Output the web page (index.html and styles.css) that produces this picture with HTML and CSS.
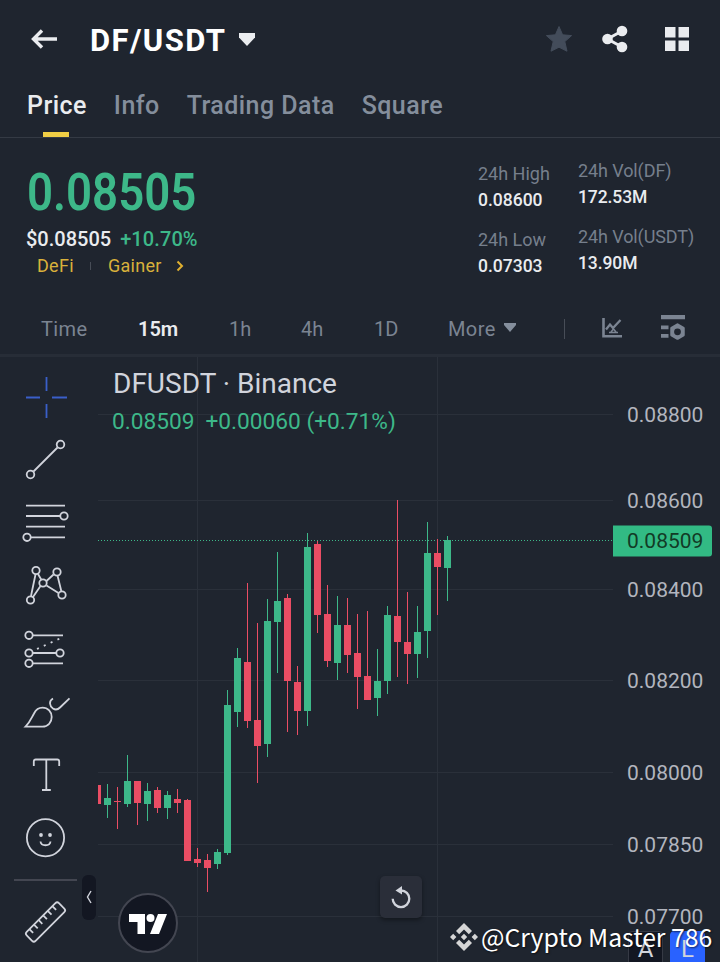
FILE: index.html
```html
<!DOCTYPE html>
<html lang="en">
<head>
  <meta charset="UTF-8">
  <meta name="viewport" content="width=device-width, initial-scale=1.0">
  <title>DF/USDT</title>
  <link rel="stylesheet" href="styles.css">
</head>
<body>
  <header class="topbar">
    <svg class="back" width="28" height="22" viewBox="0 0 28 22"><path d="M27 11H4M12 2.500L3.500 11L12 19.500" fill="none" stroke="#eaecef" stroke-width="3.400"/></svg>
    <h1>DF/USDT</h1>
    <svg class="caret" width="16" height="13" viewBox="0 0 16 13"><path d="M0 0h16v4.500L8 13L0 4.500z" fill="#eaecef"/></svg>
    <div class="actions">
      <svg width="28" height="28" viewBox="0 0 28 28"><path d="M14 1.500l3.600 8.300 9 .8-6.800 6 2.200 9.600-8-4-8 4 2.200-9.600-6.800-6 9-.8z" fill="#434c5a" stroke="#434c5a" stroke-linejoin="round"/></svg>
      <svg width="28" height="28" viewBox="0 0 28 28"><g fill="#eaecef"><circle cx="6.500" cy="14" r="5.300"/><circle cx="21" cy="6" r="5.300"/><circle cx="21" cy="22" r="5.300"/></g><path d="M21 6L6.500 14L21 22" fill="none" stroke="#eaecef" stroke-width="3"/></svg>
      <svg width="28" height="28" viewBox="0 0 28 28"><path d="M2 2h10.500v10.500H2zM15.500 2h10.500v10.500H15.500zM2 15.500h10.500v10.500H2zM15.500 15.500h10.500v10.500H15.500z" fill="#eaecef"/></svg>
    </div>
  </header>

  <nav class="tabs">
    <a class="tab active">Price</a>
    <a class="tab">Info</a>
    <a class="tab">Trading Data</a>
    <a class="tab">Square</a>
  </nav>

  <section class="summary">
    <div class="quote">
      <div class="last">0.08505</div>
      <div class="fiat"><span>$0.08505</span><span class="change">+10.70%</span></div>
      <div class="tags">
        <span>DeFi</span><i></i><span>Gainer</span>
        <svg width="8" height="12" viewBox="0 0 8 12"><path d="M1.500 1.500L6 6L1.500 10.500" fill="none" stroke="#e0b030" stroke-width="2"/></svg>
      </div>
    </div>
    <dl class="stats range">
      <dt>24h High</dt><dd>0.08600</dd>
      <dt>24h Low</dt><dd>0.07303</dd>
    </dl>
    <dl class="stats volume">
      <dt>24h Vol(DF)</dt><dd>172.53M</dd>
      <dt>24h Vol(USDT)</dt><dd>13.90M</dd>
    </dl>
  </section>

  <nav class="intervals">
    <span class="time">Time</span>
    <span class="m15">15m</span>
    <span class="h1">1h</span>
    <span class="h4">4h</span>
    <span class="d1">1D</span>
    <span class="more">More</span>
    <svg width="12" height="9" viewBox="0 0 12 9"><path d="M0 0h12v2L6 9L0 2z" fill="#848e9c"/></svg>
    <i></i>
    <svg width="20" height="20" viewBox="0 0 20 20" fill="none" stroke="#7b8492" stroke-width="2.600"><path d="M1.500 0V18.200H20"/><path d="M4 11.500L8 6.500L11 10L18.500 2" stroke-width="2.300"/><path d="M7 14.500h9M9 14l2.500-3 2.500 3" stroke-width="1.500"/></svg>
    <svg class="chart-settings" width="26" height="26" viewBox="0 0 26 26"><path d="M1 0h24v4.300H1zM1 10.500h7.500v3.800H1zM1 19h7.500v3.800H1z" fill="#7b8492"/><path d="M17.500 9.600l6 3.500v7l-6 3.500-6-3.500v-7z" fill="#7b8492" stroke="#7b8492" stroke-width="2.500" stroke-linejoin="round"/><circle cx="17.500" cy="16.800" r="3.400" fill="#1f252f"/></svg>
  </nav>

  <main class="chart">
    <aside class="tools">
      <svg viewBox="0 0 46 46" class="cross"><path d="M4 23.500h14M30 23.500h15M24.500 3v14M24.500 30v14"/></svg>
      <svg viewBox="0 0 46 46"><path d="M11.500 34.500L35.500 10.500"/><circle cx="8.500" cy="37.500" r="3.800"/><circle cx="38.500" cy="7.500" r="3.800"/></svg>
      <svg viewBox="0 0 46 46"><path d="M4 5.700h39M4 16h34M4 26.700h39M9 37.300h34"/><circle cx="42" cy="16" r="3.700"/><circle cx="5" cy="37.300" r="3.700"/></svg>
      <svg viewBox="0 0 46 46"><path d="M13.600 11L9 33M16 11l3.500 6M24.500 18l7-6.500M35.600 13l3.700 15M18.500 23l-7.500 11M24.500 22.500l12 7.500"/><circle cx="14" cy="7.500" r="3.700"/><circle cx="35" cy="9" r="3.700"/><circle cx="21" cy="20" r="3.700"/><circle cx="8.500" cy="37" r="3.700"/><circle cx="40" cy="32" r="3.700"/></svg>
      <svg viewBox="0 0 46 46"><path d="M11 9.300h30M11 27h23M11 37.300h30"/><path d="M15 23L39 12" stroke-dasharray="2 5.500"/><circle cx="7" cy="9.300" r="3.700"/><circle cx="7" cy="27" r="3.700"/><circle cx="38" cy="27" r="3.700"/><circle cx="7" cy="37.300" r="3.700"/></svg>
      <svg viewBox="0 0 46 46"><path d="M3.500 37.700C8 33 9.500 29 12 24.500C14 20.500 17 18.700 20.500 18.700C26 18.700 29.700 23 29.700 28C29.700 33.500 26 37.700 20.500 37.700Z"/><path d="M31 9.500C26.500 12 27.500 17 31 19.500C34 21.500 36.500 20 38 18.500L47.500 9.300"/></svg>
      <svg viewBox="0 0 46 46"><path d="M11.800 14V9.500Q11.800 7.500 13.800 7.500H35.200Q37.200 7.500 37.200 9.500V14M24.300 7.500V38M20 38h8.800"/></svg>
      <svg viewBox="0 0 46 46"><circle cx="23.500" cy="22.700" r="18.600"/><path d="M18.500 26.500C19 31.500 28 31.500 28.500 26.500"/><g class="dot"><circle cx="19" cy="20" r="1.900"/><circle cx="28" cy="20" r="1.900"/></g></svg>
      <hr>
      <svg viewBox="0 0 46 46"><g transform="rotate(-45 23.500 23)"><rect x=".7" y="16.700" width="45.600" height="12.600" rx="2.500"/><path d="M7 17v5M13.500 17v5M20 17v5M26.500 17v5M33 17v5M39.500 17v5"/></g></svg>
    </aside>

    <div class="plot">
      <svg id="candles" width="515" height="605" viewBox="98 357 515 605" shape-rendering="crispEdges"></svg>
      <div class="legend">
        <div class="symbol">DFUSDT · Binance</div>
        <div class="values"><span>0.08509</span><span>+0.00060 (+0.71%)</span></div>
      </div>
      <div class="collapse"><svg width="6" height="14" viewBox="0 0 6 14"><path d="M5 1L1.500 7L5 13" fill="none" stroke="#d1d4dc" stroke-width="1.400"/></svg></div>
      <div class="tv"><svg width="38" height="20" viewBox="0 0 38 20" fill="#fff"><path d="M0 0h16v20H8.500V8H0zM29 0h9L30 20h-9z"/><circle cx="21.500" cy="4" r="4"/></svg></div>
      <div class="reset"><svg width="22" height="24" viewBox="0 0 22 24"><path d="M11 5.500A8.300 8.300 0 1 1 2.700 13.800" fill="none" stroke="#d1d4dc" stroke-width="2.300"/><path d="M12 1v8.500L5.500 5.500z" fill="#d1d4dc"/></svg></div>
    </div>

    <aside class="scale" id="scale">
      <div class="mode auto">A</div>
      <div class="mode log">L</div>
    </aside>
  </main>

  <div class="watermark">
    <svg width="28" height="28" viewBox="0 0 28 28" fill="#d6d6d6"><path d="M14 0l8 8-3.200 3.200L14 6.400l-4.800 4.800L6 8zM14 28l8-8-3.200-3.200L14 21.600l-4.800-4.800L6 20zM3.200 10.800L6.400 14l-3.200 3.200L0 14zM24.800 10.800L28 14l-3.200 3.200L21.600 14zM14 10.800l3.200 3.200-3.200 3.200-3.200-3.200z"/></svg>
    <span>@Crypto Master 786</span>
  </div>

  <script>
    // x, body top, body bottom, wick top, wick bottom, up
    const candles = [
      [97, 785, 804, 785, 804, 0], [107, 798, 805, 784, 818, 1], [117, 801, 802, 787, 829, 0],
      [127, 781, 804, 755, 807, 1], [137, 781, 803, 781, 825, 0], [147, 791, 804, 783, 821, 1],
      [157, 790, 808, 787, 813, 0], [167, 795, 808, 791, 819, 1], [177, 799, 803, 789, 813, 0],
      [187, 800, 861, 799, 861, 0], [197, 859, 863, 848, 867, 0], [207, 860, 868, 854, 892, 0],
      [217, 852, 864, 849, 869, 1], [227, 705, 853, 690, 855, 1], [237, 658, 712, 648, 727, 1],
      [247, 662, 721, 583, 728, 0], [257, 720, 746, 623, 783, 0], [267, 621, 744, 599, 757, 1],
      [277, 601, 622, 552, 673, 1], [287, 598, 681, 594, 732, 0], [297, 682, 711, 666, 735, 0],
      [307, 547, 711, 533, 726, 1], [317, 544, 615, 541, 633, 0], [327, 614, 661, 585, 667, 0],
      [337, 625, 663, 596, 680, 1], [347, 625, 655, 598, 673, 0], [357, 653, 677, 614, 709, 0],
      [367, 676, 700, 611, 700, 0], [377, 681, 698, 649, 716, 1], [387, 615, 681, 606, 694, 1],
      [397, 616, 642, 500, 677, 0], [407, 642, 654, 592, 684, 0], [417, 632, 654, 606, 678, 1],
      [427, 553, 631, 522, 658, 1], [437, 553, 567, 539, 615, 0], [447, 540, 568, 536, 601, 1]
    ];
    const levels = [
      [414, '0.08800'], [500, '0.08600'], [589, '0.08400'], [680, '0.08200'],
      [772, '0.08000'], [844, '0.07850'], [916, '0.07700']
    ];

    let out = '';
    levels.forEach(([y]) => {
      out += `<rect class="grid" x="98" y="${y}" width="515" height="1"/>`;
    });
    [197, 437].forEach(x => {
      out += `<rect class="grid" x="${x}" y="357" width="1" height="605"/>`;
    });
    out += '<path class="last-line" d="M98 540.5H613"/>';
    candles.forEach(([x, top, bottom, high, low, up]) => {
      const cls = up ? 'up' : 'down';
      out += `<rect class="${cls}" x="${x}" y="${high}" width="1" height="${low - high}"/>`;
      out += `<rect class="${cls}" x="${x - 3}" y="${top}" width="7" height="${bottom - top}"/>`;
    });
    document.getElementById('candles').innerHTML = out;

    // Price labels sit on their grid line
    const scale = document.getElementById('scale');
    levels.concat([[540, '0.08509']]).forEach(([y, text]) => {
      const label = document.createElement('span');
      label.className = text === '0.08509' ? 'level current' : 'level';
      label.style.top = `${y - 356}px`;
      label.textContent = text;
      scale.prepend(label);
    });
  </script>
</body>
</html>
```

FILE: styles.css
```css
* {
  box-sizing: border-box;
}
body {
  margin: 0;
  width: 720px;
  height: 962px;
  overflow: hidden;
  position: relative;
  background-color: #1f252f;
  color: #eaecef;
  font-family: Roboto, "Liberation Sans", sans-serif;
}
svg {
  display: block;
  flex: none;
}
span, a {
  white-space: nowrap;
}

/* header */
.topbar {
  display: flex;
  align-items: center;
  height: 78px;
  padding: 0 29px 0 31px;
}
h1 {
  width: 134px;
  margin: 3px 0 0 32px;
  font-size: 31px;
  line-height: 36px;
  font-weight: 700;
  letter-spacing: 1.400px;
  color: #fff;
}
.back {
  margin-left: -1px;
}
.caret {
  margin-left: 15px;
}
.actions {
  display: flex;
  margin-left: auto;
}
.actions svg + svg {
  margin-left: 28px;
}
.actions svg:last-child {
  margin-left: 34px;
}

/* page tabs */
.tabs {
  display: flex;
  height: 60px;
  padding-left: 27px;
  border-bottom: 1px solid #343a44;
}
.tab {
  padding-top: 12px;
  font-size: 25px;
  line-height: 32px;
  font-weight: 500;
  letter-spacing: .450px;
  color: #848e9c;
}
.tab + .tab {
  margin-left: 27px;
}
.tab.active {
  display: flex;
  flex-direction: column;
  align-items: center;
  color: #eaecef;
}
.tab.active::after {
  content: "";
  width: 26px;
  height: 5px;
  margin-top: 10px;
  margin-right: 2px;
  background-color: #f0ce45;
}

/* price summary */
.summary {
  display: flex;
  height: 162px;
  padding-left: 27px;
}
.quote {
  width: 451px;
  padding-top: 27px;
}
.last {
  font-size: 51px;
  line-height: 56px;
  font-weight: 600;
  transform: scaleX(.895);
  transform-origin: 0 50%;
  color: #3db889;
}
.fiat {
  display: flex;
  gap: 9px;
  margin: 5px 0 0 -1px;
  font-size: 20px;
  line-height: 26px;
  font-weight: 500;
}
.change {
  letter-spacing: .1px;
  color: #3db889;
}
.tags {
  display: flex;
  align-items: center;
  margin-top: 1px;
  padding-left: 10px;
  font-size: 18px;
  line-height: 26px;
  letter-spacing: .3px;
  color: #d9b13b;
}
.tags i {
  width: 1px;
  height: 8px;
  margin: 0 16.500px;
  background-color: #474d57;
}
.tags svg {
  margin-left: 14px;
}
.stats {
  margin: 0;
  font-size: 18px;
}
.range {
  width: 100px;
  padding-top: 23px;
}
.volume {
  padding-top: 20px;
  letter-spacing: -.1px;
}
.stats dt {
  line-height: 26px;
  color: #767f8c;
}
.stats dd {
  margin: 0 0 14px;
  line-height: 26px;
  font-size: 17.500px;
  font-weight: 500;
}

/* interval picker */
.intervals {
  display: flex;
  align-items: center;
  height: 57px;
  padding: 3px 0 0 41px;
  border-bottom: 3px solid #272d37;
  font-size: 20px;
  color: #7b8492;
}
.time {
  width: 97px;
  letter-spacing: .400px;
}
.m15 {
  width: 91px;
  font-weight: 600;
  color: #eaecef;
}
.h1 {
  width: 72px;
}
.h4 {
  width: 73px;
}
.d1 {
  width: 74px;
}
.more {
  width: 56px;
  letter-spacing: .400px;
}
.intervals i {
  width: 1px;
  height: 20px;
  margin: 0 37px 0 48px;
  background-color: #474d57;
}
.intervals svg {
  margin-top: -2px;
}
.chart-settings {
  margin-left: 38px;
}

/* chart */
.chart {
  display: grid;
  grid-template-columns: 98px 515px 107px;
  height: 605px;
}
.tools {
  padding: 17px 0 0 22px;
}
.tools svg {
  width: 46px;
  height: 46px;
  margin-bottom: 17px;
  overflow: visible;
  fill: none;
  stroke: #d1d4dc;
  stroke-width: 1.800;
}
.tools .cross {
  stroke: #3a5fc9;
}
.tools .dot {
  fill: #d1d4dc;
  stroke: none;
}
.tools hr {
  width: 63px;
  height: 2px;
  margin: 18px 0 18px -8px;
  border: 0;
  background-color: #434651;
}
.plot {
  position: relative;
}
.grid {
  fill: #2a303a;
}
.up {
  fill: #3db889;
}
.down {
  fill: #ea4d64;
}
.last-line {
  stroke: #3db889;
  stroke-dasharray: 1 2;
}
.legend {
  position: absolute;
  top: 10px;
  left: 14px;
}
.symbol {
  padding-left: 1px;
  font-size: 28px;
  line-height: 34px;
  color: #d1d4dc;
}
.values {
  display: flex;
  gap: 11px;
  margin-top: 7px;
  font-size: 22.700px;
  line-height: 28px;
  color: #3db889;
}
.collapse {
  position: absolute;
  top: 518px;
  left: -16px;
  width: 14px;
  height: 45px;
  padding: 15px 4px;
  border-radius: 6px;
  background-color: #131722;
}
.tv {
  position: absolute;
  top: 536px;
  left: 20px;
  width: 60px;
  height: 60px;
  padding: 19px 9px;
  border: 2px solid #434651;
  border-radius: 50%;
  background-color: #131722;
}
.reset {
  position: absolute;
  top: 519px;
  left: 282px;
  display: flex;
  align-items: center;
  justify-content: center;
  width: 42px;
  height: 42px;
  border-radius: 5px;
  background-color: #2a2e39;
  box-shadow: 0 2px 4px rgba(0, 0, 0, .4);
}

/* price scale */
.scale {
  position: relative;
  display: flex;
  gap: 7px;
  padding: 574px 0 0 15px;
}
.level {
  position: absolute;
  left: 0;
  padding-left: 14px;
  width: 99px;
  font-size: 21px;
  line-height: 31px;
  color: #b2b5be;
  transform: translateY(-50%);
}
.level.current {
  border-radius: 0 3px 3px 0;
  background-color: #32ba84;
  color: #123a26;
}
.mode {
  position: relative;
  width: 35px;
  height: 36px;
  border: 1px solid #363a45;
  border-radius: 4px;
  background-color: #131722;
  font-size: 24px;
  line-height: 34px;
  text-align: center;
  color: #d1d4dc;
}
.mode.log {
  border-color: #2962ff;
  background-color: #2962ff;
}

.watermark {
  position: absolute;
  left: 450px;
  top: 920px;
  display: flex;
  align-items: center;
  gap: 3px;
  font-family: "Noto Sans CJK SC", "Noto Sans", sans-serif;
  font-size: 24.800px;
  line-height: 36px;
  color: #fff;
  text-shadow: 1px 1px 2px rgba(0, 0, 0, .6);
}
.watermark span {
  margin-top: -2px;
}
```
